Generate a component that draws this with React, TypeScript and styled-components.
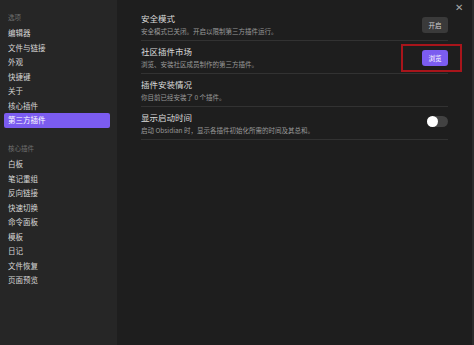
import React from "react";
import styled, { createGlobalStyle } from "styled-components";

const GlobalStyle = createGlobalStyle`
  html, body, #root {
    margin: 0;
    height: 100%;
  }
  body {
    background: #1e1e1e;
    font-family: "Noto Sans CJK SC", "Noto Sans", sans-serif;
    overflow: hidden;
  }
`;

const Window = styled.div`
  display: flex;
  height: 100%;
  width: 100%;
`;

const Sidebar = styled.nav`
  width: 117px;
  flex-shrink: 0;
  background: #262626;
  box-sizing: border-box;
  padding: 10px 7px 0 4px;
`;

const GroupLabel = styled.div<{ $gap?: number }>`
  height: 14px;
  line-height: 14px;
  margin-top: ${(p) => p.$gap ?? 0}px;
  margin-bottom: 2px;
  padding-left: 4px;
  font-size: 6.5px;
  color: #6f6f6f;
`;

const NavItem = styled.div<{ $active?: boolean }>`
  height: 14.5px;
  line-height: 14.5px;
  padding-left: 4px;
  font-size: 7.5px;
  border-radius: 2px;
  color: ${(p) => (p.$active ? "#ffffff" : "#d6d6d6")};
  background: ${(p) => (p.$active ? "#7b5cf0" : "transparent")};
`;

const Main = styled.main`
  position: relative;
  flex: 1;
  box-sizing: border-box;
  padding: 8px 24px 0 24px;
  border-right: 2px solid #2b2b2b;
`;

const Close = styled.div`
  position: absolute;
  top: 2px;
  right: 9px;
  font-size: 10px;
  color: #a8a8a8;
  line-height: 10px;
`;

const Row = styled.div`
  display: flex;
  align-items: center;
  justify-content: space-between;
  padding: 4px 0 3px;
  border-bottom: 1px solid #323232;
`;

const Info = styled.div`
  display: flex;
  flex-direction: column;
`;

const Title = styled.div`
  font-size: 8.5px;
  line-height: 13px;
  color: #dcdcdc;
`;

const Desc = styled.div`
  font-size: 6.5px;
  line-height: 12px;
  color: #9a9a9a;
`;

const Button = styled.button<{ $primary?: boolean }>`
  width: 26px;
  height: 16px;
  padding: 0;
  border: none;
  border-radius: 3px;
  font-family: inherit;
  font-size: 6.5px;
  color: ${(p) => (p.$primary ? "#ffffff" : "#d0d0d0")};
  background: ${(p) => (p.$primary ? "#7b5cf0" : "#3a3a3a")};
`;

const Marked = styled.span`
  position: relative;
  display: inline-flex;
  &::after {
    content: "";
    position: absolute;
    left: -21px;
    right: -14px;
    top: -6px;
    bottom: -6px;
    border: 2px solid #a8151b;
  }
`;

const Toggle = styled.div`
  position: relative;
  width: 21px;
  height: 11px;
  border-radius: 6px;
  background: #424242;
  margin-top: -5px;
  &::before {
    content: "";
    position: absolute;
    left: 0;
    top: 0;
    width: 11px;
    height: 11px;
    border-radius: 50%;
    background: #ffffff;
  }
`;

const optionItems = ["编辑器", "文件与链接", "外观", "快捷键", "关于", "核心插件", "第三方插件"];
const coreItems = ["白板", "笔记重组", "反向链接", "快速切换", "命令面板", "模板", "日记", "文件恢复", "页面预览"];

const App: React.FC = () => {
  return (
    <>
      <GlobalStyle />
      <Window>
        <Sidebar>
          <GroupLabel>选项</GroupLabel>
          {optionItems.map((item) => (
            <NavItem key={item} $active={item === "第三方插件"}>
              {item}
            </NavItem>
          ))}
          <GroupLabel $gap={13.5}>核心插件</GroupLabel>
          {coreItems.map((item) => (
            <NavItem key={item}>{item}</NavItem>
          ))}
        </Sidebar>
        <Main>
          <Close>✕</Close>
          <Row>
            <Info>
              <Title>安全模式</Title>
              <Desc>安全模式已关闭。开启以限制第三方插件运行。</Desc>
            </Info>
            <Button>开启</Button>
          </Row>
          <Row>
            <Info>
              <Title>社区插件市场</Title>
              <Desc>浏览、安装社区成员制作的第三方插件。</Desc>
            </Info>
            <Marked>
              <Button $primary>浏览</Button>
            </Marked>
          </Row>
          <Row>
            <Info>
              <Title>插件安装情况</Title>
              <Desc>你目前已经安装了 0 个插件。</Desc>
            </Info>
          </Row>
          <Row>
            <Info>
              <Title>显示启动时间</Title>
              <Desc>启动 Obsidian 时，显示各插件初始化所需的时间及其总和。</Desc>
            </Info>
            <Toggle />
          </Row>
        </Main>
      </Window>
    </>
  );
};

export default App;
